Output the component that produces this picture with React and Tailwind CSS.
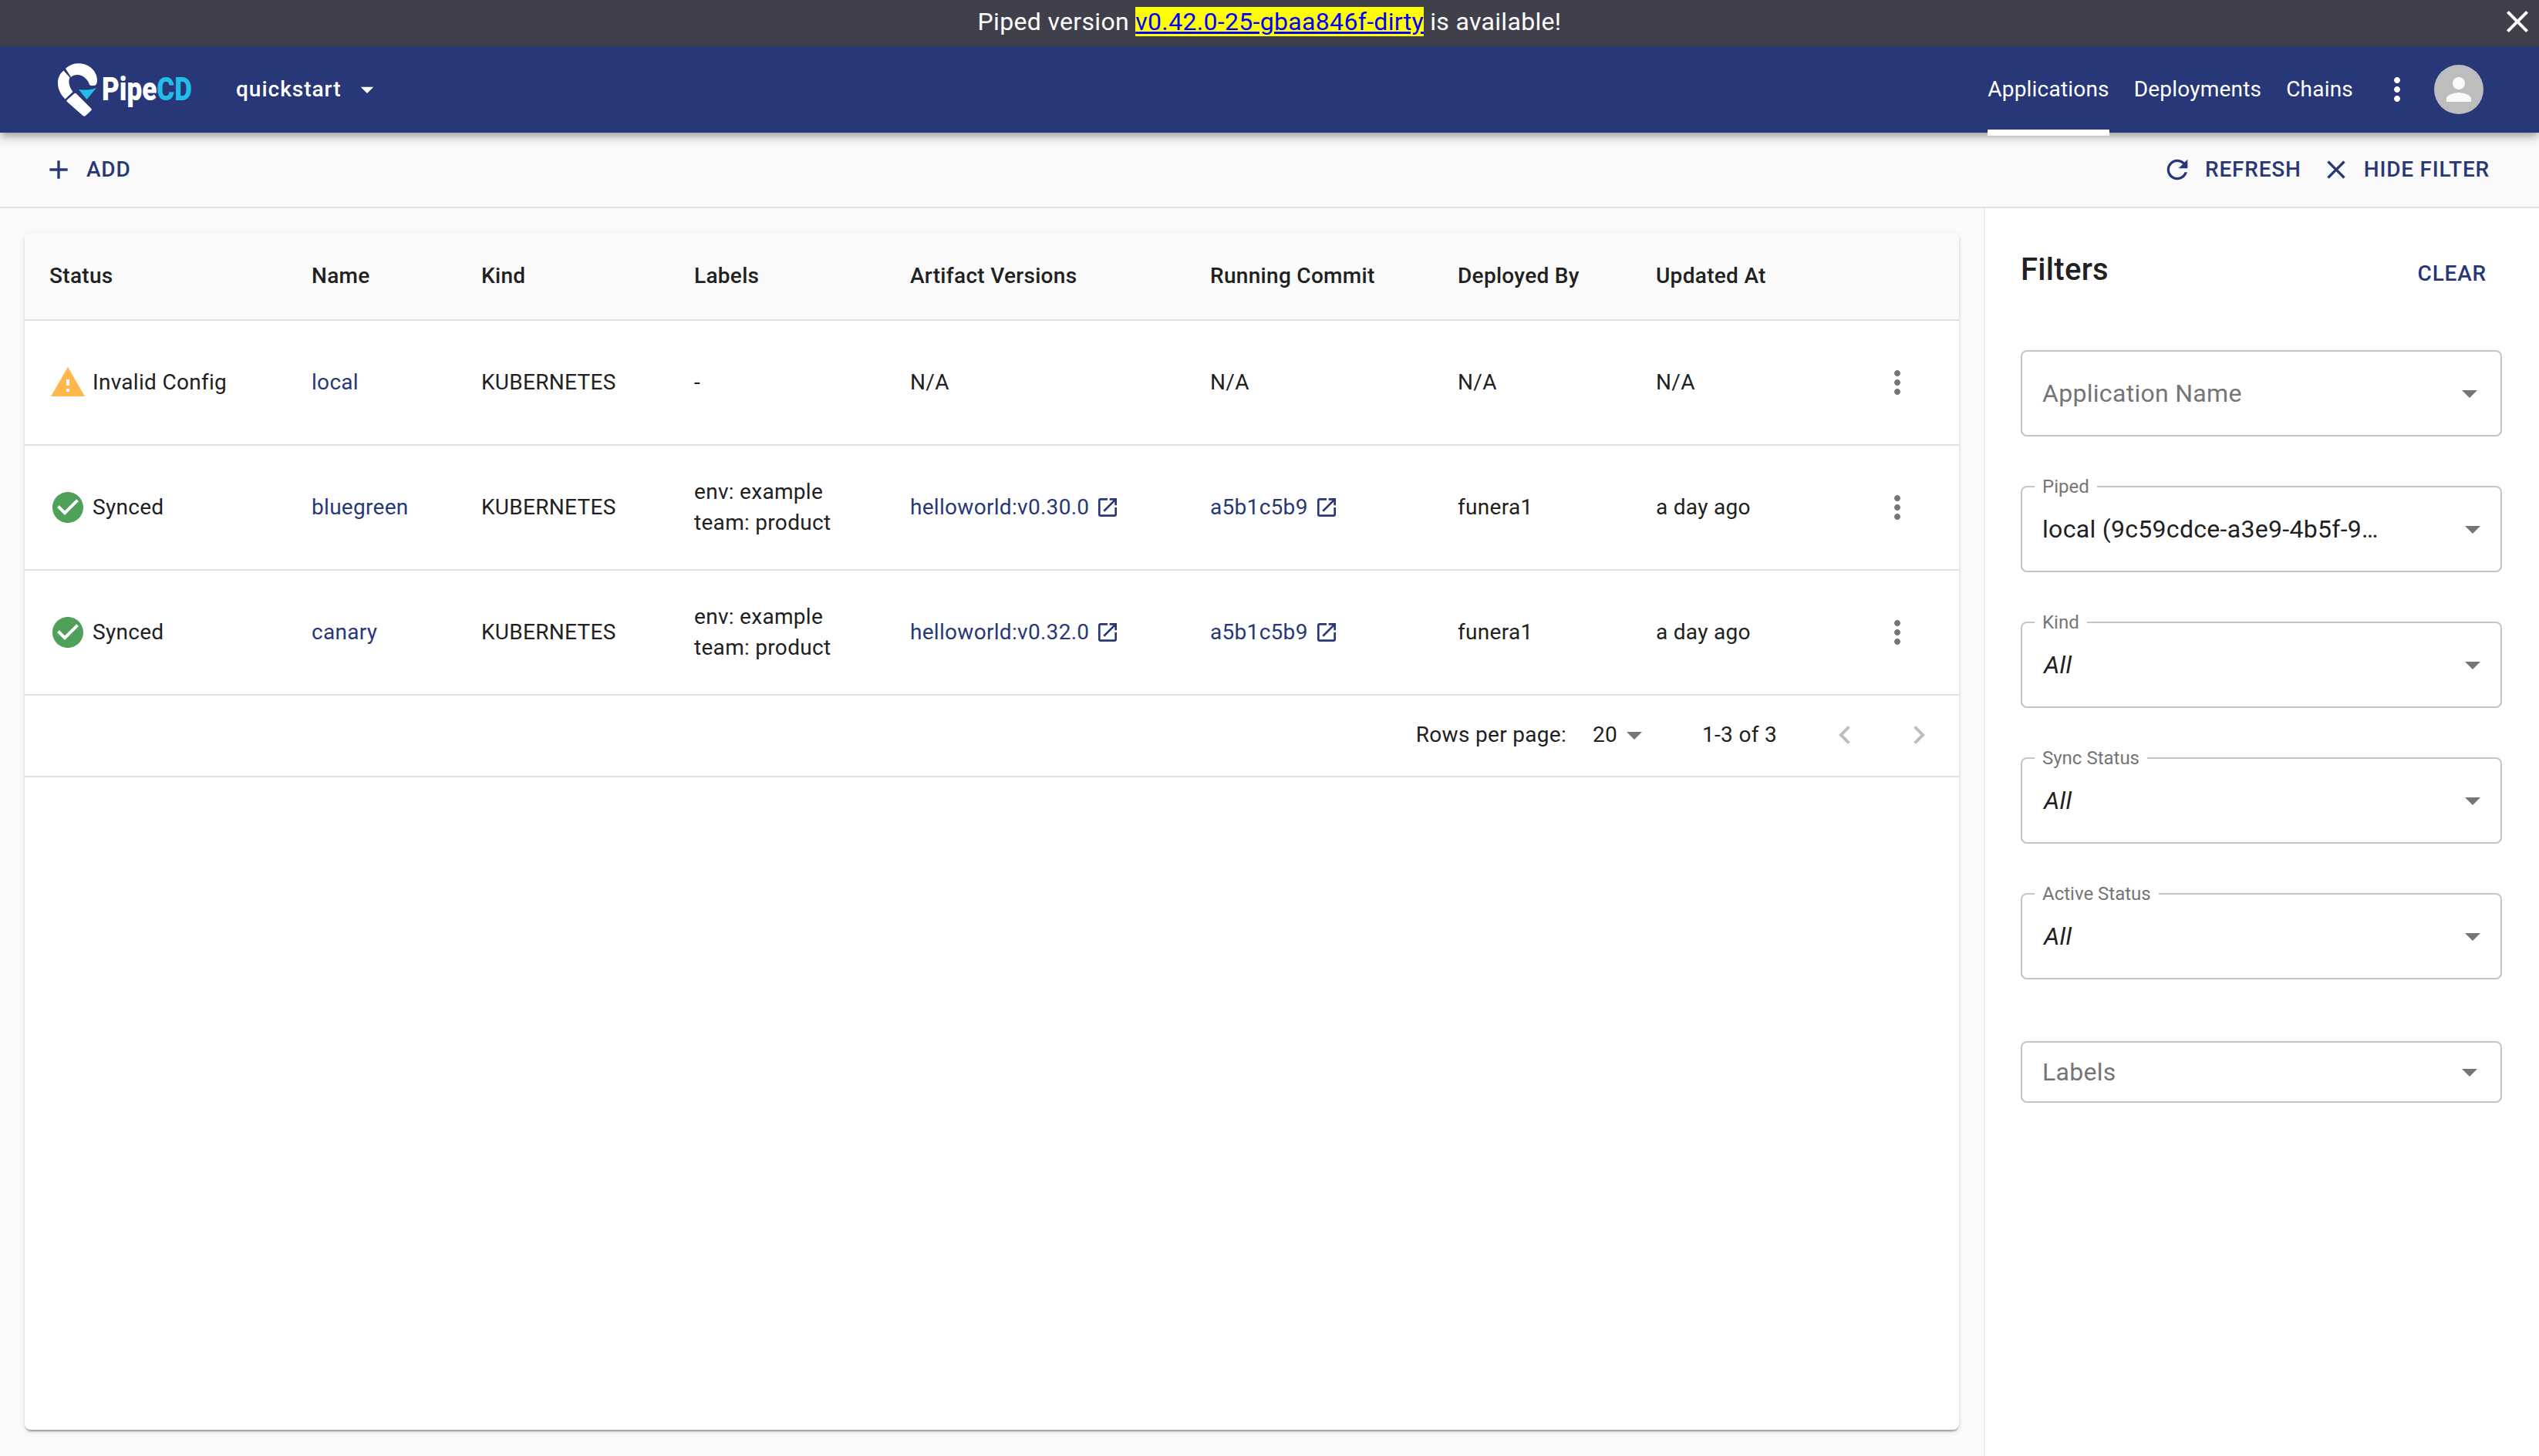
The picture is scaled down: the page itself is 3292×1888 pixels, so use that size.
import React from "react";

const PATHS = {
  close: "M19 6.41L17.59 5 12 10.59 6.41 5 5 6.41 10.59 12 5 17.59 6.41 19 12 13.41 17.59 19 19 17.59 13.41 12z",
  caret: "M7 10l5 5 5-5z",
  more: "M12 8c1.1 0 2-.9 2-2s-.9-2-2-2-2 .9-2 2 .9 2 2 2zm0 2c-1.1 0-2 .9-2 2s.9 2 2 2 2-.9 2-2-.9-2-2-2zm0 6c-1.1 0-2 .9-2 2s.9 2 2 2 2-.9 2-2-.9-2-2-2z",
  person: "M12 12c2.21 0 4-1.79 4-4s-1.79-4-4-4-4 1.79-4 4 1.79 4 4 4zm0 2c-2.67 0-8 1.34-8 4v2h16v-2c0-2.66-5.33-4-8-4z",
  add: "M19 13h-6v6h-2v-6H5v-2h6V5h2v6h6v2z",
  refresh: "M17.65 6.35C16.2 4.9 14.21 4 12 4c-4.42 0-7.99 3.58-7.99 8s3.57 8 7.99 8c3.73 0 6.84-2.55 7.73-6h-2.08c-.82 2.33-3.04 4-5.65 4-3.31 0-6-2.69-6-6s2.69-6 6-6c1.66 0 3.14.69 4.22 1.78L13 11h7V4l-2.35 2.35z",
  warning: "M1 21h22L12 2 1 21zm12-3h-2v-2h2v2zm0-4h-2v-4h2v4z",
  check: "M12 2C6.48 2 2 6.48 2 12s4.48 10 10 10 10-4.48 10-10S17.52 2 12 2zm-2 15l-5-5 1.41-1.41L10 14.17l7.59-7.59L19 8l-9 9z",
  external: "M19 19H5V5h7V3H5c-1.11 0-2 .9-2 2v14c0 1.1.89 2 2 2h14c1.1 0 2-.9 2-2v-7h-2v7zM14 3v2h3.59l-9.83 9.83 1.41 1.41L19 6.41V10h2V3h-7z",
  left: "M15.41 7.41L14 6l-6 6 6 6 1.41-1.41L10.83 12z",
  right: "M10 6L8.59 7.41 13.17 12l-4.58 4.59L10 18l6-6z",
};

const Icon = ({ name, className }) => (
  <svg viewBox="0 0 24 24" fill="currentColor" className={`shrink-0 ${className}`}>
    <path d={PATHS[name]} />
  </svg>
);

const Logo = () => (
  <div className="flex items-center">
    <svg viewBox="0 0 54 72" className="w-[54px] h-[72px] shrink-0">
      <path fill="#fff" d="M11 9C17 3 25 1.5 32 2.5 44 4.500 52 14 52 24c0 3-1 7-4 7-2 0-5 0-6-1-1-5-7-13-16-13-3 0-6 1-8 3z" />
      <path fill="#fff" d="M8.500 11.500 16.500 20.500C14.500 24 15 32 20.500 39L10.500 48.500C3 41 1 34 1 27 1 21 4 15 8.500 11.500z" />
      <path fill="#fff" d="M13 49.500 22 41.500c1-1 2-1 3 0L44 60.500c1 1 1 2 0 3L37 70c-1 1-2.500 1-3.500 0L13 52c-1-1-1-1.500 0-2.500z" />
      <path fill="#22bde9" d="M28 36c7 1 15 1 23-2L38.500 49z" />
    </svg>
    <div className="ml-[4px] w-[115px] h-[46px]">
      <span className="inline-block origin-left scale-x-[0.835] whitespace-nowrap text-[42px] leading-[46px] font-black text-white">
        Pipe<span className="text-[#22bde9]">CD</span>
      </span>
    </div>
  </div>
);

const ToolButton = ({ icon, children }) => (
  <button className="flex items-center gap-[16px] text-[28px] font-medium tracking-[0.8px] text-[#283778]">
    <Icon name={icon} className="w-[40px] h-[40px]" />
    {children}
  </button>
);

const ROW = "grid grid-cols-[340px_220px_276px_280px_389px_321px_257px_1fr] items-center";

const COLUMNS = ["Status", "Name", "Kind", "Labels", "Artifact Versions", "Running Commit", "Deployed By", "Updated At"];

const APPS = [
  { status: "Invalid Config", icon: "warning", name: "local", labels: ["-"], artifact: "N/A", commit: "N/A", by: "N/A", at: "N/A" },
  { status: "Synced", icon: "check", name: "bluegreen", labels: ["env: example", "team: product"], artifact: "helloworld:v0.30.0", commit: "a5b1c5b9", by: "funera1", at: "a day ago" },
  { status: "Synced", icon: "check", name: "canary", labels: ["env: example", "team: product"], artifact: "helloworld:v0.32.0", commit: "a5b1c5b9", by: "funera1", at: "a day ago" },
];

const ExternalCell = ({ text }) => {
  if (text === "N/A") return <div className="pl-[32px]">N/A</div>;
  return (
    <div className="pl-[32px] flex items-center gap-[8px] text-[#283778]">
      {text}
      <Icon name="external" className="w-[32px] h-[32px]" />
    </div>
  );
};

const AppRow = ({ app }) => (
  <div className={`${ROW} h-[162px] border-b-2 border-[#e0e0e0] text-[28px] leading-[40px] tracking-[0.3px] text-[#212121]`}>
    <div className="pl-[32px] flex items-center gap-[8px]">
      <Icon
        name={app.icon}
        className={app.icon === "warning" ? "w-[48px] h-[48px] text-[#ffb74d]" : "w-[48px] h-[48px] text-[#4fa058]"}
      />
      {app.status}
    </div>
    <div className="pl-[32px] text-[#283778]">{app.name}</div>
    <div className="pl-[32px]">KUBERNETES</div>
    <div className="pl-[32px]">
      {app.labels.map((label) => (
        <div key={label}>{label}</div>
      ))}
    </div>
    <ExternalCell text={app.artifact} />
    <ExternalCell text={app.commit} />
    <div className="pl-[32px]">{app.by}</div>
    <div className="pl-[32px] flex items-center justify-between pr-[56px]">
      {app.at}
      <Icon name="more" className="w-[48px] h-[48px] text-[#757575]" />
    </div>
  </div>
);

const SelectField = ({ label, value, italic }) => (
  <div className="relative h-[112px] rounded-[8px] border-2 border-[#c4c4c4] flex items-center pl-[26px] pr-[14px]">
    {label && (
      <span className="absolute left-[16px] top-[-15px] bg-white px-[10px] text-[24px] leading-[28px] text-[#757575]">
        {label}
      </span>
    )}
    <span className={`flex-1 text-[32px] tracking-[0.3px] ${italic ? "italic pl-[2px] text-[#212121]" : value ? "text-[#212121]" : "text-[#757575]"}`}>
      {value || "Application Name"}
    </span>
    <Icon name="caret" className={value ? "w-[48px] h-[48px] mr-[-2px] text-[#757575]" : "w-[48px] h-[48px] mr-[2px] text-[#757575]"} />
  </div>
);

const App = () => {
  return (
    <div className="h-screen flex flex-col overflow-hidden bg-[#fafafa] font-['Roboto',sans-serif]">
      {/* new version banner */}
      <div className="relative h-[60px] shrink-0 bg-[#40404c] flex items-center justify-center pb-[4px] text-[32px] tracking-[0.32px] text-white">
        <span>
          Piped version{" "}
          <a className="bg-[#ffff00] text-[#0000ff] underline">v0.42.0-25-gbaa846f-dirty</a> is available!
        </span>
        <Icon name="close" className="absolute right-[4px] top-[4px] w-[48px] h-[48px]" />
      </div>

      <header className="relative z-10 h-[112px] shrink-0 bg-[#283778] flex items-center justify-between pl-[74px] pr-[72px] text-white shadow-[0_4px_8px_-2px_rgba(0,0,0,0.2),0_8px_10px_rgba(0,0,0,0.14),0_2px_20px_rgba(0,0,0,0.12)]">
        <div className="flex items-center">
          <Logo />
          <button className="ml-[59px] flex items-center text-[28px] font-medium tracking-[1px]">
            quickstart
            <Icon name="caret" className="ml-[13px] w-[40px] h-[40px]" />
          </button>
        </div>
        <div className="flex items-center h-full">
          <nav className="flex items-center h-full gap-[32px] text-[28px] tracking-[0.2px]">
            <a className="relative h-full flex items-center">
              Applications
              <span className="absolute left-0 right-0 bottom-[-4px] h-[8px] bg-white" />
            </a>
            <a>Deployments</a>
            <a>Chains</a>
          </nav>
          <Icon name="more" className="ml-[33px] w-[48px] h-[48px]" />
          <div className="ml-[24px] w-[64px] h-[64px] rounded-full bg-[#bdbdbd] flex items-center justify-center">
            <Icon name="person" className="w-[48px] h-[48px] text-[#fafafa]" />
          </div>
        </div>
      </header>

      <div className="h-[98px] shrink-0 border-b-2 border-[#e0e0e0] flex items-center justify-between pl-[56px] pr-[64px]">
        <ToolButton icon="add">ADD</ToolButton>
        <div className="flex items-center gap-[25px]">
          <ToolButton icon="refresh">REFRESH</ToolButton>
          <ToolButton icon="close">HIDE FILTER</ToolButton>
        </div>
      </div>

      <div className="flex-1 flex min-h-0">
        <main className="flex-1 p-[32px] pb-[34px]">
          <div className="h-full bg-white rounded-[8px] shadow-[0_4px_2px_-2px_rgba(0,0,0,0.2),0_2px_2px_rgba(0,0,0,0.14),0_2px_6px_rgba(0,0,0,0.12)]">
            <div className={`${ROW} h-[114px] bg-[#fafafa] border-b-2 border-[#e0e0e0] text-[28px] font-medium tracking-[0.3px] text-[#212121] rounded-t-[8px]`}>
              {COLUMNS.map((col) => (
                <div key={col} className="pl-[32px]">{col}</div>
              ))}
            </div>
            {APPS.map((app) => (
              <AppRow key={app.name} app={app} />
            ))}
            <div className="h-[106px] pb-[2px] border-b-2 border-[#e0e0e0] flex items-center justify-end text-[28px] tracking-[0.3px] text-[#212121]">
              <span>Rows per page:</span>
              <span className="ml-[34px]">20</span>
              <Icon name="caret" className="w-[48px] h-[48px] text-[#757575] ml-[-2px]" />
              <span className="ml-[64px]">1-3 of 3</span>
              <Icon name="left" className="ml-[64px] w-[48px] h-[48px] text-[#bdbdbd]" />
              <Icon name="right" className="ml-[48px] mr-[28px] w-[48px] h-[48px] text-[#bdbdbd]" />
            </div>
          </div>
        </main>

        <aside className="w-[720px] shrink-0 bg-white border-l-2 border-[#eeeeee] pt-[48px] pl-[46px] pr-[48px]">
          <div className="h-[64px] mb-[72px] flex items-center justify-between">
            <h2 className="text-[40px] font-medium tracking-[0.3px] text-[#212121]">Filters</h2>
            <button className="mt-[10px] mr-[20px] text-[28px] font-medium tracking-[0.8px] text-[#283778]">CLEAR</button>
          </div>
          <div className="flex flex-col gap-[64px]">
            <SelectField />
            <SelectField label="Piped" value="local (9c59cdce-a3e9-4b5f-9…" />
            <SelectField label="Kind" value="All" italic />
            <SelectField label="Sync Status" value="All" italic />
            <SelectField label="Active Status" value="All" italic />
          </div>
          <div className="mt-[80px] h-[80px] rounded-[8px] border-2 border-[#c4c4c4] flex items-center pl-[26px] pr-[16px]">
            <span className="flex-1 text-[32px] tracking-[0.3px] text-[#757575]">Labels</span>
            <Icon name="caret" className="w-[48px] h-[48px] text-[#757575]" />
          </div>
        </aside>
      </div>
    </div>
  );
};

export default App;
